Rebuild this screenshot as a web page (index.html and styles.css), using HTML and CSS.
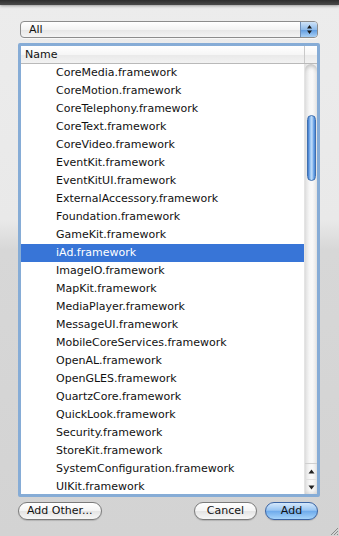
FILE: index.html
```html
<!DOCTYPE html>
<html>
<head>
  <meta charset="UTF-8">
  <link rel="stylesheet" href="styles.css">
</head>
<body>
  <div class="titlebar"></div>
  <div class="sheet">
    <div class="popup">
      <span class="popup-label">All</span>
      <span class="stepper">
        <svg width="7" height="11" viewBox="0 0 7 11"><path d="M3.5 1 L6 4.5 L1 4.5 Z M3.5 10 L6 6.5 L1 6.5 Z" fill="#1a1a1a"/></svg>
      </span>
    </div>

    <div class="listbox">
      <div class="table">
        <div class="header">
          <div class="col-name">Name</div>
          <div class="col-corner"></div>
        </div>
        <div class="body">
          <div class="rows">
            <div class="row">CoreMedia.framework</div>
            <div class="row">CoreMotion.framework</div>
            <div class="row">CoreTelephony.framework</div>
            <div class="row">CoreText.framework</div>
            <div class="row">CoreVideo.framework</div>
            <div class="row">EventKit.framework</div>
            <div class="row">EventKitUI.framework</div>
            <div class="row">ExternalAccessory.framework</div>
            <div class="row">Foundation.framework</div>
            <div class="row">GameKit.framework</div>
            <div class="row selected">iAd.framework</div>
            <div class="row">ImageIO.framework</div>
            <div class="row">MapKit.framework</div>
            <div class="row">MediaPlayer.framework</div>
            <div class="row">MessageUI.framework</div>
            <div class="row">MobileCoreServices.framework</div>
            <div class="row">OpenAL.framework</div>
            <div class="row">OpenGLES.framework</div>
            <div class="row">QuartzCore.framework</div>
            <div class="row">QuickLook.framework</div>
            <div class="row">Security.framework</div>
            <div class="row">StoreKit.framework</div>
            <div class="row">SystemConfiguration.framework</div>
            <div class="row">UIKit.framework</div>
          </div>
          <div class="scrollbar">
            <div class="track">
              <div class="thumb"></div>
            </div>
            <div class="arrows">
              <div class="arrow"><svg width="7" height="5" viewBox="0 0 7 5"><path d="M3.5 0.5 L6.5 4.5 L0.5 4.5 Z" fill="#222"/></svg></div>
              <div class="arrow"><svg width="7" height="5" viewBox="0 0 7 5"><path d="M3.5 4.5 L6.5 0.5 L0.5 0.5 Z" fill="#222"/></svg></div>
            </div>
          </div>
        </div>
      </div>
    </div>

    <div class="buttons">
      <button class="btn">Add Other...</button>
      <div class="spacer"></div>
      <button class="btn cancel">Cancel</button>
      <button class="btn default">Add</button>
    </div>
  </div>
  <div class="grip">
    <svg width="10" height="10" viewBox="0 0 10 10"><path d="M9 2 L2 9 M9 5 L5 9 M9 8 L8 9" stroke="#8a8a8a" stroke-width="1"/></svg>
  </div>
</body>
</html>
```

FILE: styles.css
```css
html, body {
	margin		: 0;
	padding		: 0;
}
body {
	width		: 339px;
	height		: 536px;
	overflow	: hidden;
	position	: relative;
	font-family	: "DejaVu Sans", "Liberation Sans", sans-serif;
	font-size	: 11px;
	color		: #111;
	background	: linear-gradient(to bottom, #ececec 0px, #e9e9e9 220px, #d7d7d7 250px, #d3d3d3 536px);
}
.titlebar {
	height		: 5px;
	background	: linear-gradient(to bottom, #2e2e2e, #4a4a4a);
	box-shadow	: 0 1px 3px rgba(0,0,0,0.35);
}
.sheet {
	display		: flex;
	flex-direction	: column;
	padding		: 16px 19px 0 18px;
}

/* popup button */
.popup {
	margin		: 0 2px;
	height		: 15px;
	border		: 1px solid #8c8c8c;
	border-radius	: 4px;
	background	: linear-gradient(to bottom, #ffffff 0%, #f3f3f3 50%, #e6e6e6 51%, #f4f4f4 100%);
	display		: flex;
	align-items	: center;
	box-shadow	: 0 1px 0 rgba(255,255,255,0.6);
	overflow	: hidden;
}
.popup-label {
	flex		: 1;
	padding-left	: 8px;
	line-height	: 15px;
}
.stepper {
	width		: 16px;
	height		: 15px;
	display		: flex;
	align-items	: center;
	justify-content	: center;
	border-left	: 1px solid #6f8fb8;
	background	: linear-gradient(to bottom, #cfe3f8 0%, #8fbbea 50%, #5d9ae0 51%, #a9d0f5 100%);
}

/* list with focus ring */
.listbox {
	margin-top	: 5px;
	height		: 448px;
	border		: 3px solid #86acd6;
	border-radius	: 2px;
	background	: #fff;
}
.table {
	height		: 100%;
	display		: flex;
	flex-direction	: column;
}
.header {
	display		: flex;
	height		: 17px;
	border-bottom	: 1px solid #b9b9b9;
	background	: linear-gradient(to bottom, #ffffff 0%, #f6f6f6 50%, #e9e9e9 51%, #f2f2f2 100%);
}
.col-name {
	flex		: 1;
	padding-left	: 4px;
	line-height	: 17px;
	border-right	: 1px solid #c9c9c9;
}
.col-corner {
	width		: 12px;
}
.body {
	flex		: 1;
	display		: flex;
	overflow	: hidden;
}
.rows {
	flex		: 1;
}
.row {
	height		: 18px;
	line-height	: 18px;
	padding-left	: 35px;
	white-space	: nowrap;
}
.row.selected {
	background	: #3875d7;
	color		: #fff;
}

/* scrollbar */
.scrollbar {
	width		: 12px;
	display		: flex;
	flex-direction	: column;
	border-left	: 1px solid #e4e4e4;
	background	: linear-gradient(to right, #e2e2e2, #f7f7f7 40%, #f9f9f9 60%, #e8e8e8);
}
.track {
	flex		: 1;
	padding-top	: 51px;
	border-radius	: 6px 6px 0 0;
	box-shadow	: inset 0 4px 4px -2px #bdbdbd;
}
.thumb {
	margin		: 0 auto;
	width		: 9px;
	height		: 66px;
	border-radius	: 5px;
	border		: 1px solid #3f6fae;
	box-sizing	: border-box;
	background	: linear-gradient(to right, #3a78cf, #9cc8f4 35%, #c3defa 55%, #6fa6e6 80%, #4a86d6);
}
.arrows {
	height		: 30px;
	border-top	: 1px solid #cfcfcf;
	box-shadow	: inset 0 -2px 3px rgba(0,0,0,0.08);
}
.arrow {
	height		: 15px;
	display		: flex;
	align-items	: center;
	justify-content	: center;
}
.arrow + .arrow {
	border-top	: 1px solid #e0e0e0;
	height		: 14px;
}

/* bottom buttons */
.buttons {
	display		: flex;
	align-items	: center;
	margin		: 5px 2px 0 0;
	gap		: 8px;
}
.spacer {
	flex		: 1;
}
.btn {
	font-family	: "DejaVu Sans", "Liberation Sans", sans-serif;
	font-size	: 11px;
	color		: #111;
	height		: 18px;
	padding		: 0 8px;
	border		: 1px solid #7b7b7b;
	border-radius	: 9px;
	background	: linear-gradient(to bottom, #ffffff 0%, #f4f4f4 50%, #e4e4e4 51%, #f7f7f7 100%);
	box-shadow	: 0 1px 1px rgba(0,0,0,0.15);
	line-height	: 16px;
}
.cancel {
	padding		: 0 12px;
}
.default {
	width		: 53px;
	border-color	: #3b64a3;
	background	: linear-gradient(to bottom, #d5e8fb 0%, #9ac6f3 45%, #6fabeb 52%, #a6d4fa 100%);
}
.grip {
	position	: absolute;
	right		: 0;
	bottom		: 0;
	width		: 10px;
	height		: 10px;
}
```
